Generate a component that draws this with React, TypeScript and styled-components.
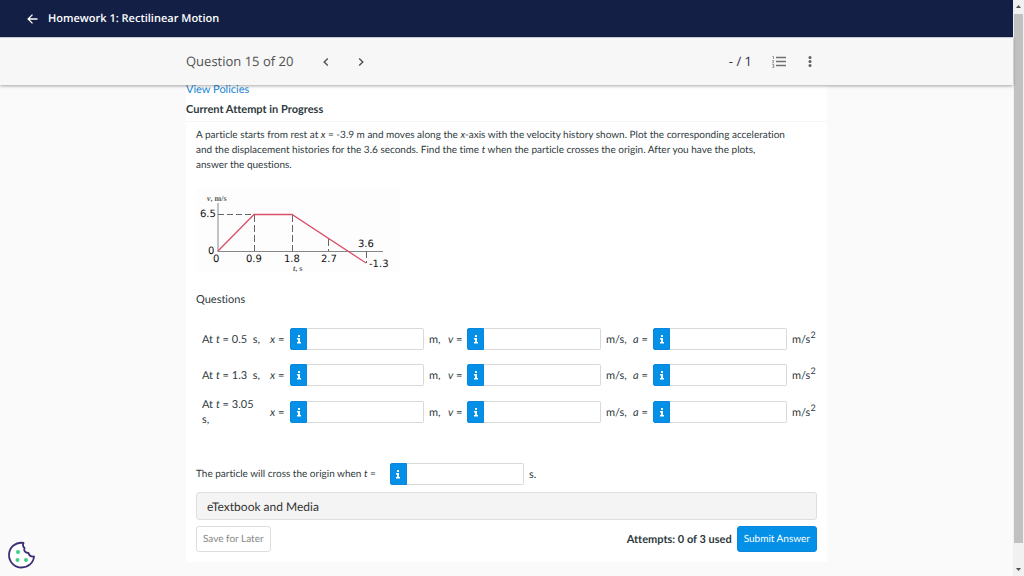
import React from "react";
import styled, { createGlobalStyle } from "styled-components";

const GlobalStyle = createGlobalStyle`
  * { box-sizing: border-box; }
  body {
    margin: 0;
    background: #fafafa;
    color: #2f3a40;
    font-family: Lato, "Liberation Sans", sans-serif;
    font-size: 11px;
    line-height: 15px;
    font-variant-ligatures: none;
    text-rendering: geometricPrecision;
  }
  button, input { font-family: inherit; text-rendering: inherit; }
`;

const Shell = styled.div`
  display: grid;
  grid-template-columns: minmax(0, 1fr) 11px;
  min-height: 100vh;
`;

const Page = styled.div`
  min-width: 0;
`;

const TopBar = styled.header`
  display: flex;
  align-items: center;
  gap: 10px;
  height: 37px;
  padding-left: 26px;
  background: #131f45;
  color: #fff;
  font-family: "Open Sans", sans-serif;
`;

const IconButton = styled.button`
  display: grid;
  place-items: center;
  width: 12px;
  height: 16px;
  padding: 0;
  border: 0;
  background: none;
  color: inherit;
  cursor: pointer;
`;

const Title = styled.h1`
  margin: 0;
  font-size: 11px;
  font-weight: 600;
`;

const Toolbar = styled.nav`
  position: relative;
  z-index: 1;
  height: 48px;
  border-top: 1px solid #c9cbd6;
  background: #f7f7f7;
  box-shadow: 0 1px 3px rgba(0, 0, 0, 0.35);
  color: #505050;
  font-family: "Open Sans", sans-serif;
  font-size: 13px;
`;

const Column = styled.div`
  max-width: 641px;
  margin: 0 auto;
`;

const ToolbarRow = styled(Column)`
  display: flex;
  align-items: center;
  height: 47px;
  padding-right: 11px;
`;

const Pager = styled.div`
  display: flex;
  gap: 23px;
  margin-left: 27px;
`;

const Score = styled.span`
  margin-left: auto;
  color: #2b2f4a;
`;

const Tools = styled.div`
  display: flex;
  gap: 20px;
  margin-left: 20px;
`;

const Card = styled(Column)`
  background: #fff;
  padding-bottom: 10px;
`;

const PolicyLink = styled.a`
  display: block;
  line-height: 9px;
  color: #1a86d9;
  text-decoration: none;
`;

const Status = styled.h2`
  margin: 0;
  padding: 8px 0 4px;
  border-bottom: 1px solid #f5f5f5;
  font-size: 11px;
  font-weight: 700;
`;

const Body = styled.main`
  padding: 6px 10px 0;
`;

const Prompt = styled.p`
  margin: 0;
  font-size: 10px;
`;

const Chart = styled.svg`
  display: block;
  margin: 16px 0 19px;
`;

const Subheading = styled.h3`
  margin: 0 0 17px;
  font-size: 11px;
  font-weight: 400;
`;

const AnswerRow = styled.div<{ $gap: number }>`
  display: grid;
  grid-template-columns: 68px 20px minmax(0, 1fr) 24px 19px minmax(0, 1fr) 32px 20px minmax(0, 1fr) 30px;
  align-items: center;
  height: 30px;
  margin: 0 0 ${(p) => p.$gap}px 6px;
`;

const Time = styled.span`
  padding-right: 8px;
`;

const Unit = styled.span`
  padding-left: 5px;

  sup {
    font-size: 9px;
    line-height: 0;
  }
`;

const Field = styled.div`
  display: flex;
  height: 22px;
`;

const InfoButton = styled.button`
  flex: 0 0 17px;
  padding: 0;
  border: 1px solid #0a86dc;
  border-radius: 2px 0 0 2px;
  background: #0390e6;
  color: #fff;
  font-size: 11px;
  display: grid;
  place-items: center;
`;

const Entry = styled.input`
  flex: 1;
  min-width: 0;
  border: 1px solid #d9d9d9;
  border-left: 0;
  border-radius: 0 2px 2px 0;
  background: #fff;
  font-size: 11px;
`;

const CrossRow = styled.div`
  display: flex;
  align-items: center;
  gap: 14px;
  margin-top: 36px;
`;

const CrossText = styled.span`
  font-size: 10px;
`;

const CrossAnswer = styled.div`
  display: grid;
  grid-template-columns: 134px auto;
  align-items: center;
`;

const MediaButton = styled.button`
  display: block;
  width: 100%;
  height: 28px;
  margin-top: 7px;
  padding: 0 10px;
  border: 1px solid #dedede;
  border-radius: 3px;
  background: #f4f4f4;
  color: #333;
  font-size: 12px;
  text-align: left;
`;

const Footer = styled.footer`
  display: flex;
  align-items: center;
  gap: 5px;
  margin-top: 6px;
`;

const ActionButton = styled.button<{ $primary?: boolean }>`
  height: 26px;
  padding: 0 6px;
  border: 1px solid ${(p) => (p.$primary ? "#0a86dc" : "#dedede")};
  border-radius: 3px;
  background: ${(p) => (p.$primary ? "#0390e6" : "#fff")};
  color: ${(p) => (p.$primary ? "#fff" : "#888")};
  font-size: 10px;
`;

const Attempts = styled.strong`
  margin-left: auto;
`;

const CookieButton = styled.button`
  position: fixed;
  left: 8px;
  bottom: 7px;
  width: 28px;
  height: 28px;
  padding: 0;
  border: 0;
  background: none;
`;

const ScrollTrack = styled.div`
  position: sticky;
  top: 0;
  display: flex;
  flex-direction: column;
  align-items: center;
  height: 100vh;
  background: #f1f1f1;
`;

const ScrollThumb = styled.div`
  flex: 1;
  width: 9px;
  margin-bottom: 19px;
  background: #c1c1c1;
`;

const ScrollArrow = styled.svg`
  width: 5px;
  height: 14px;
`;

function InfoField({ label }: { label: string }) {
  return (
    <Field>
      <InfoButton type="button" aria-label={"Info about " + label}>
        <svg width="6" height="9" viewBox="0 0 6 9" fill="currentColor">
          <path d="M2 0h2v2H2zM1 3h3v4h1v1.500H1V7h1V4.500H1z" />
        </svg>
      </InfoButton>
      <Entry type="text" aria-label={label} />
    </Field>
  );
}

function Answers({ time, gap, spaced }: { time: string; gap: number; spaced: boolean }) {
  return (
    <AnswerRow $gap={gap}>
      <Time>
        At <i>t</i> = {time}
        {spaced ? "\u00a0\u00a0s," : <><br />s,</>}
      </Time>
      <span><i>x</i> =</span>
      <InfoField label={"x at t = " + time} />
      <Unit>m,</Unit>
      <span><i>v</i> =</span>
      <InfoField label={"v at t = " + time} />
      <Unit>m/s,</Unit>
      <span><i>a</i> =</span>
      <InfoField label={"a at t = " + time} />
      <Unit>m/s<sup>2</sup></Unit>
    </AnswerRow>
  );
}

function VelocityChart() {
  return (
    <Chart width="204" height="84" viewBox="0 0 204 84" role="img" aria-label="Velocity history">
      <rect width="204" height="84" fill="#fdfdfd" />
      <path d="M22 14V63M22 62.500H187" fill="none" stroke="#85888b" />
      <path d="M22 25.500H58" fill="none" stroke="#666" strokeDasharray="6 3" />
      <path d="M58.500 26V62M96.500 26V62M132.500 50V62M170.500 62V74" fill="none" stroke="#666" strokeDasharray="7 3" />
      <path d="M22 62L58 25.500H96L170 74" fill="none" stroke="#d9506a" strokeWidth="1.300" />
      <g fill="#111" fontFamily="DejaVu Sans, sans-serif" fontSize="10">
        <text x="4" y="28">6.5</text>
        <text x="12" y="65">0</text>
        <text x="17" y="73">0</text>
        <text x="50" y="73">0.9</text>
        <text x="88" y="73">1.8</text>
        <text x="125" y="73">2.7</text>
        <text x="162" y="58">3.6</text>
        <text x="173" y="78">-1.3</text>
      </g>
      <g fill="#555" fontFamily="Liberation Serif, serif" fontSize="8" fontWeight="700">
        <text x="11" y="12"><tspan fontStyle="italic">v</tspan>, m/s</text>
        <text x="97" y="82"><tspan fontStyle="italic">t</tspan>, s</text>
      </g>
    </Chart>
  );
}

export default function App() {
  return (
    <>
      <GlobalStyle />
      <Shell>
        <Page>
          <TopBar>
            <IconButton type="button" aria-label="Back">
              <svg width="11" height="10" viewBox="0 0 11 10" fill="none" stroke="currentColor" strokeWidth="1.300">
                <path d="M10.500 5H1.200M5.500 0.600L1.100 5L5.500 9.400" />
              </svg>
            </IconButton>
            <Title>Homework 1: Rectilinear Motion</Title>
          </TopBar>
          <Toolbar aria-label="Question navigation">
            <ToolbarRow>
              <span>Question 15 of 20</span>
              <Pager>
                <IconButton type="button" aria-label="Previous question">
                  <svg width="6" height="8" viewBox="0 0 6 8" fill="none" stroke="currentColor" strokeWidth="1.400">
                    <path d="M4.800 0.500L1.200 4L4.800 7.500" />
                  </svg>
                </IconButton>
                <IconButton type="button" aria-label="Next question">
                  <svg width="6" height="8" viewBox="0 0 6 8" fill="none" stroke="currentColor" strokeWidth="1.400">
                    <path d="M1.200 0.500L4.800 4L1.200 7.500" />
                  </svg>
                </IconButton>
              </Pager>
              <Score>- / 1</Score>
              <Tools>
                <IconButton type="button" aria-label="Question list">
                  <svg width="14" height="12" viewBox="0 0 14 12" fill="none" stroke="#707070">
                    <path d="M4 1.500H14M4 5.500H14M4 9.500H14" strokeWidth="1.300" />
                    <path d="M0.500 0.500H1.500V3M0.300 4.500H1.800L0.500 6.800H2M0.300 8.500H1.800V11.500H0.300M0.800 10H1.800" strokeWidth="0.700" />
                  </svg>
                </IconButton>
                <IconButton type="button" aria-label="More options">
                  <svg width="4" height="12" viewBox="0 0 4 12" fill="#606060">
                    <circle cx="2" cy="1.500" r="1.500" />
                    <circle cx="2" cy="5.500" r="1.500" />
                    <circle cx="2" cy="9.500" r="1.500" />
                  </svg>
                </IconButton>
              </Tools>
            </ToolbarRow>
          </Toolbar>
          <Card>
            <PolicyLink href="#policies">View Policies</PolicyLink>
            <Status>Current Attempt in Progress</Status>
            <Body>
              <Prompt>
                A particle starts from rest at <i>x</i> = -3.9 m and moves along the <i>x</i>-axis with the
                velocity history shown. Plot the corresponding acceleration
                <br />
                and the displacement histories for the 3.6 seconds. Find the time <i>t</i> when the particle
                crosses the origin. After you have the plots,
                <br />
                answer the questions.
              </Prompt>
              <VelocityChart />
              <Subheading>Questions</Subheading>
              <Answers time="0.5" gap={6} spaced />
              <Answers time="1.3" gap={7} spaced />
              <Answers time="3.05" gap={0} spaced={false} />
              <CrossRow>
                <CrossText>The particle will cross the origin when <i>t</i> =</CrossText>
                <CrossAnswer>
                  <InfoField label="t at the origin" />
                  <Unit>s.</Unit>
                </CrossAnswer>
              </CrossRow>
              <MediaButton type="button">eTextbook and Media</MediaButton>
              <Footer>
                <ActionButton type="button">Save for Later</ActionButton>
                <Attempts>Attempts: 0 of 3 used</Attempts>
                <ActionButton type="submit" $primary>Submit Answer</ActionButton>
              </Footer>
            </Body>
          </Card>
        </Page>
        <ScrollTrack aria-hidden="true">
          <ScrollArrow viewBox="0 0 5 14"><path d="M0 8L2.500 5L5 8Z" fill="#505050" /></ScrollArrow>
          <ScrollThumb />
          <ScrollArrow viewBox="0 0 5 14"><path d="M0 6L2.500 9L5 6Z" fill="#505050" /></ScrollArrow>
        </ScrollTrack>
      </Shell>
      <CookieButton type="button" aria-label="Cookie preferences">
        <svg width="28" height="28" viewBox="0 0 28 28">
          <path
            d="M15.500 2C8 0.500 1 6 1 14C1 21 6.500 26.500 13.500 26.500C20 26.500 25.500 22 26 15.500C23 15.800 21 14.500 20.500 12C17.500 12 15.500 10 16.500 7C14.800 5.500 14.600 3.800 15.500 2Z"
            fill="#fff"
            stroke="#3b2f75"
            strokeWidth="1.800"
            strokeLinejoin="round"
          />
          <g fill="#3fcf8e">
            <circle cx="10" cy="11" r="2" />
            <circle cx="9.500" cy="19" r="2" />
            <circle cx="18" cy="19" r="2" />
          </g>
        </svg>
      </CookieButton>
    </>
  );
}
